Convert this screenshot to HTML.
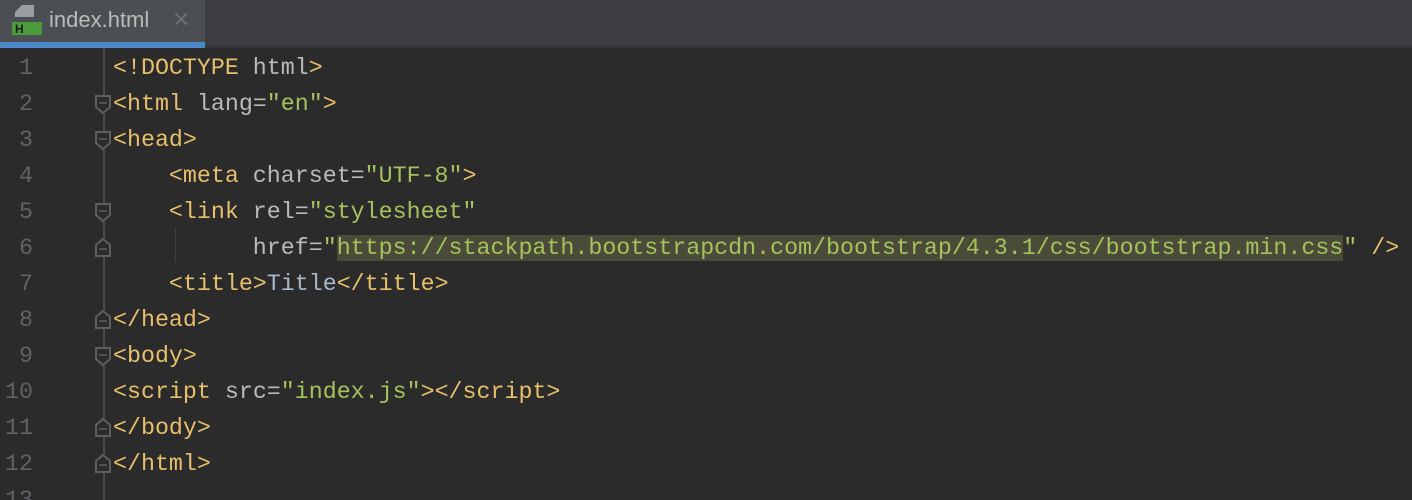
<!DOCTYPE html>
<html style="overflow:hidden;height:500px"><head><style>
body{margin:0;width:1412px;height:500px;background:#2b2b2c;overflow:hidden;position:relative;font-family:"Liberation Mono",monospace}
.bar{position:absolute;left:0;top:0;width:1412px;height:46px;background:#3c3d41;border-bottom:2px solid #333437}
.tab{position:absolute;left:0;top:0;width:205px;height:42px;background:#4b4f53;border-bottom:6px solid #4a88c7}
.tab span{position:absolute;left:49px;top:7px;font:22px "Liberation Sans",sans-serif;color:#bbbbbb}
.tab .x{left:172px;top:7px;color:#6b6e72;font-size:22px}
.sep{position:absolute;left:103px;top:48px;width:2px;height:452px;background:#4a4b4e}
.ln{position:absolute;left:0;width:33px;text-align:right;color:#606366;font-size:23.3px;line-height:36px}
.code{position:absolute;left:113px;top:50px;font-size:23.3px;line-height:36px;white-space:pre;color:#bababa}
.t{color:#e8bf6a}.s{color:#a5c25c}.v{color:#a9b7c6}
.hl{background:#4b4b39}
</style></head><body>
<div class="bar"><div class="tab">
<svg style="position:absolute;left:12px;top:5px" width="32" height="32" viewBox="0 0 32 32"><path d="M10 0h12v12H3V7z" fill="#9a9da1"/><rect x="0" y="17" width="30" height="13" fill="#4b9b3c"/><text x="3" y="28" font-family="Liberation Sans" font-weight="bold" font-size="12" fill="#1e1e1e">H</text></svg>
<span>index.html</span><span class="x">✕</span></div></div>
<div class="sep"></div>
<div class="ln" style="top:50px">1<br>2<br>3<br>4<br>5<br>6<br>7<br>8<br>9<br>10<br>11<br>12<br>13</div>
<svg style="position:absolute;left:0;top:0" width="120" height="500">
<g fill="#2b2b2c" stroke="#5c5e61" stroke-width="2">
<path d="M96 96h14v11l-7 6l-7-6z"/><path d="M96 132h14v11l-7 6l-7-6z"/><path d="M96 204h14v11l-7 6l-7-6z"/><path d="M96 348h14v11l-7 6l-7-6z"/>
<path d="M96 256h14v-11l-7-6l-7 6z"/><path d="M96 328h14v-11l-7-6l-7 6z"/><path d="M96 436h14v-11l-7-6l-7 6z"/><path d="M96 472h14v-11l-7-6l-7 6z"/>
</g>
<g stroke="#5c5e61" stroke-width="1.5"><path d="M99 103h8M99 139h8M99 211h8M99 355h8M99 249h8M99 321h8M99 429h8M99 465h8"/></g>
</svg>
<div style="position:absolute;left:175px;top:228px;width:1px;height:34px;background:#3e3f42"></div>
<div class="code"><span class="t">&lt;!DOCTYPE</span> html<span class="t">&gt;</span>
<span class="t">&lt;html</span> lang=<span class="s">"en"</span><span class="t">&gt;</span>
<span class="t">&lt;head&gt;</span>
    <span class="t">&lt;meta</span> charset=<span class="s">"UTF-8"</span><span class="t">&gt;</span>
    <span class="t">&lt;link</span> rel=<span class="s">"stylesheet"</span>
          href=<span class="s">"<span class="hl">https://stackpath.bootstrapcdn.com/bootstrap/4.3.1/css/bootstrap.min.css</span>"</span> <span class="t">/&gt;</span>
    <span class="t">&lt;title&gt;</span><span class="v">Title</span><span class="t">&lt;/title&gt;</span>
<span class="t">&lt;/head&gt;</span>
<span class="t">&lt;body&gt;</span>
<span class="t">&lt;script</span> src=<span class="s">"index.js"</span><span class="t">&gt;&lt;/script&gt;</span>
<span class="t">&lt;/body&gt;</span>
<span class="t">&lt;/html&gt;</span>
</div>
</body></html>
